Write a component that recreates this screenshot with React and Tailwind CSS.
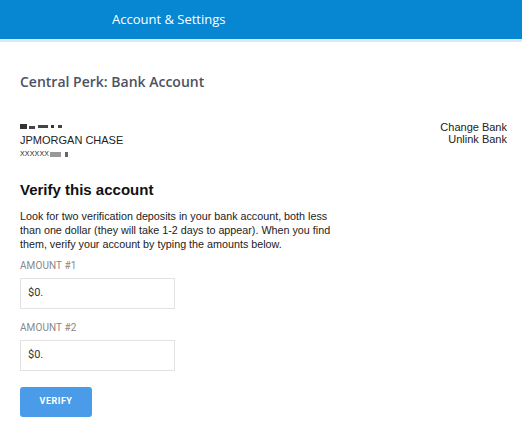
export default function App() {
  return (
    <div className="w-[522px] h-[432px] bg-white overflow-hidden" style={{ fontFamily: "Arial" }}>
      <div className="h-[39px] bg-[#0786d2] flex items-center pl-[112px]">
        <span className="text-white text-[13px] font-['Open_Sans',sans-serif]">Account &amp; Settings</span>
      </div>
      <div className="h-[3px] bg-[#dbe9f5]" />

      <div className="px-[20px]">
        <h1 className="mt-[30px] text-[14px] leading-[20px] text-[#4b5263] font-semibold font-['Open_Sans',sans-serif]">
          Central Perk: Bank Account
        </h1>

        <div className="mt-[27px] flex justify-between font-['Liberation_Sans',Arial,sans-serif] text-[11px] leading-[14px] text-[#222]">
          <div>
            <div className="flex items-center h-[14px]">
              <span className="w-[7px] h-[5px] bg-[#333] blur-[0.6px]" />
              <span className="ml-[2px] w-[6px] h-[3px] bg-[#445] blur-[0.6px] mt-[2px]" />
              <span className="ml-[3px] w-[10px] h-[3px] bg-[#444] blur-[0.6px]" />
              <span className="ml-[3px] w-[3px] h-[3px] bg-[#333] blur-[0.5px]" />
              <span className="ml-[4px] w-[4px] h-[3px] bg-[#444] blur-[0.5px]" />
            </div>
            <div>JPMORGAN CHASE</div>
            <div className="flex items-center text-[7px] h-[14px] tracking-[0.2px]">
              XXXXXX
              <span className="ml-[1px] w-[11px] h-[5px] bg-[#999] blur-[0.6px]" />
              <span className="ml-[4px] w-[3px] h-[5px] bg-[#666] blur-[0.5px]" />
            </div>
          </div>
          <div className="text-right mr-[-5px] pt-[2px] leading-[12px]">
            <div>Change Bank</div>
            <div>Unlink Bank</div>
          </div>
        </div>

        <h2 className="mt-[20px] text-[15px] leading-[18px] font-bold text-[#111] font-['Liberation_Sans',Arial,sans-serif]">
          Verify this account
        </h2>
        <p className="mt-[10px] w-[322px] text-[10.75px] leading-[14px] text-[#222] font-['Liberation_Sans',Arial,sans-serif]">
          Look for two verification deposits in your bank account, both less than one dollar (they will take 1-2 days to appear). When you find them, verify your account by typing the amounts below.
        </p>

        <label className="block mt-[9px] text-[10px] leading-[12px] text-[#888] font-['Roboto',sans-serif] tracking-[0.1px]">
          AMOUNT #1
        </label>
        <div className="mt-[6px] w-[155px] h-[31px] border border-[#e2e2e2] flex items-center pl-[7px] text-[11px] text-[#333] font-['Roboto',sans-serif]">
          $0.
        </div>

        <label className="block mt-[13px] text-[10px] leading-[12px] text-[#888] font-['Roboto',sans-serif] tracking-[0.1px]">
          AMOUNT #2
        </label>
        <div className="mt-[6px] w-[155px] h-[31px] border border-[#e2e2e2] flex items-center pl-[7px] text-[11px] text-[#333] font-['Roboto',sans-serif]">
          $0.
        </div>

        <button className="block mt-[16px] w-[72px] h-[30px] rounded-[3px] bg-[#4a9be8] text-white text-[9px] font-bold tracking-[0.5px] font-['Roboto',sans-serif]">
          VERIFY
        </button>
      </div>
    </div>
  );
}
